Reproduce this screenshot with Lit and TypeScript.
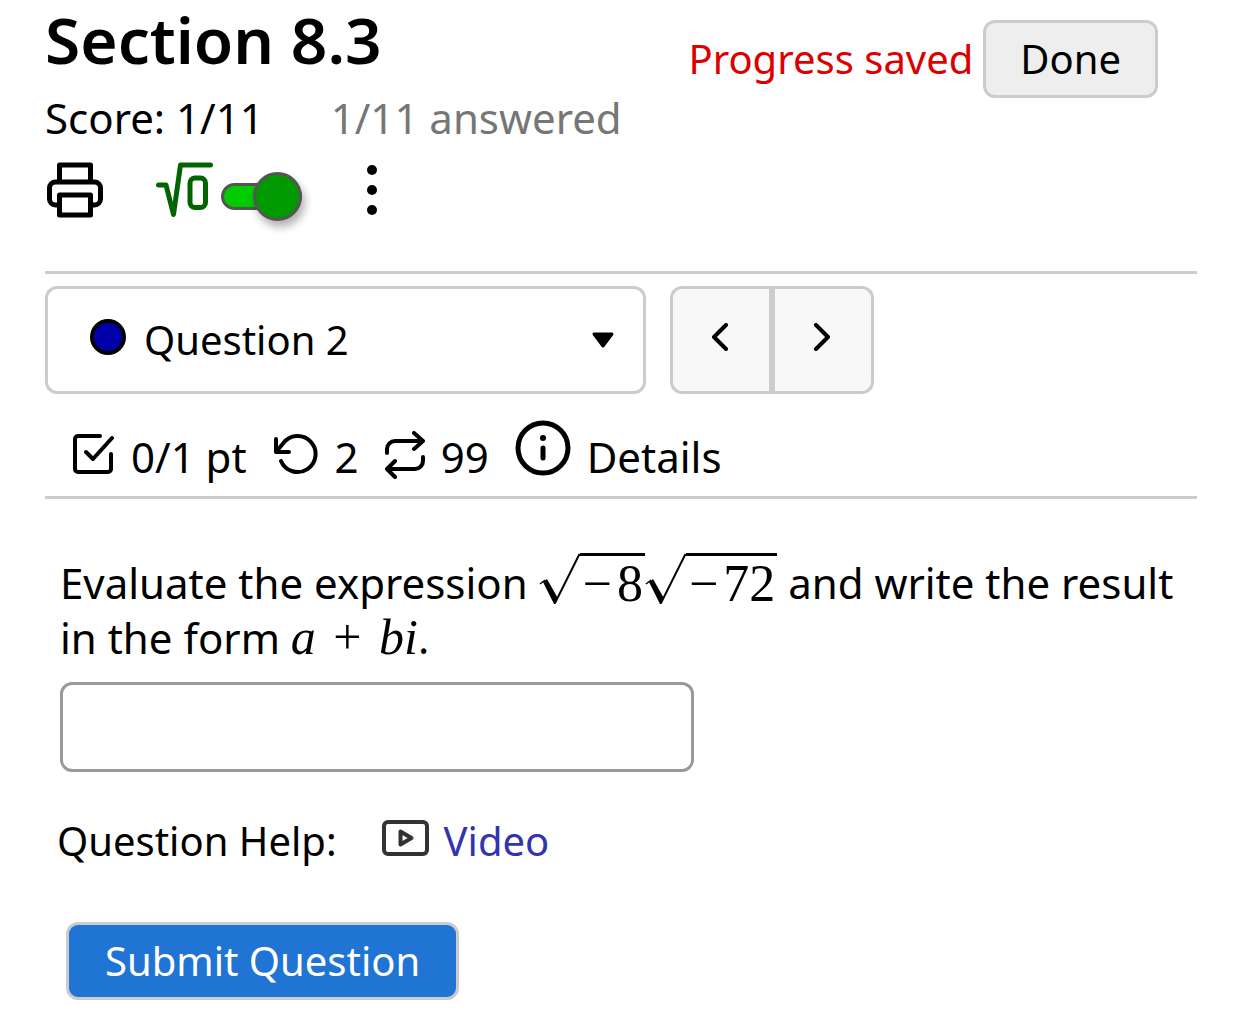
import { LitElement, html, css, svg } from "lit";
import { customElement, property, state } from "lit/decorators.js";

const printer = svg`<svg class="icon" width="56" height="56" viewBox="0 0 56 56" fill="none" stroke="currentColor" stroke-width="5" stroke-linejoin="round" aria-hidden="true">
  <path d="M12.500 20V3h31v17M12.500 43H8.500a6 6 0 0 1-6-6V26a6 6 0 0 1 6-6h39a6 6 0 0 1 6 6v11a6 6 0 0 1-6 6h-4"/>
  <path d="M12.500 33h31v20h-31z"/></svg>`;

const rootSign = svg`<svg class="icon root" width="58" height="56" viewBox="0 0 58 56" fill="none" stroke="currentColor" stroke-width="5" stroke-linecap="round" stroke-linejoin="round" aria-hidden="true">
  <path d="M2.500 23h7.500l7.500 29.500L24.500 3h30"/><rect x="34" y="16" width="15.500" height="29.500" rx="5"/></svg>`;

const dots = svg`<svg class="icon" width="10" height="50" viewBox="0 0 10 50" fill="currentColor" aria-hidden="true">
  <circle cx="5" cy="5" r="5"/><circle cx="5" cy="25" r="5"/><circle cx="5" cy="45" r="5"/></svg>`;

const checkBox = svg`<svg class="icon" width="43" height="42" viewBox="0 0 43 42" fill="none" stroke="currentColor" stroke-width="4" stroke-linecap="round" stroke-linejoin="round" aria-hidden="true">
  <path d="M28 2H6a3 3 0 0 0-3 3v30a3 3 0 0 0 3 3h30a3 3 0 0 0 3-3V20M14 18l7 7L40 4"/></svg>`;

const undo = svg`<svg class="icon" width="46" height="42" viewBox="0 0 46 42" fill="none" stroke="currentColor" stroke-width="4" stroke-linecap="round" stroke-linejoin="round" aria-hidden="true">
  <path d="M3 5v13h13M3 18L10 9.500A18 18 0 1 1 8 27"/></svg>`;

const repeat = svg`<svg class="icon" width="40" height="48" viewBox="0 0 40 48" fill="none" stroke="currentColor" stroke-width="4" stroke-linecap="round" stroke-linejoin="round" aria-hidden="true">
  <path d="M29 2l9 8-9 8M38 10H10a8 8 0 0 0-8 8v4M10 46l-8-8 8-8M2 38h28a8 8 0 0 0 8-8v-4"/></svg>`;

const info = svg`<svg class="icon" width="56" height="56" viewBox="0 0 56 56" fill="none" stroke="currentColor" stroke-width="5" stroke-linecap="round" aria-hidden="true">
  <circle cx="28" cy="28" r="25"/><path d="M28 28v10"/><circle cx="28" cy="18" r="3" fill="currentColor" stroke="none"/></svg>`;

const video = svg`<svg class="icon video" width="48" height="36" viewBox="0 0 48 36" fill="none" stroke="currentColor" stroke-linejoin="round" aria-hidden="true">
  <rect x="2" y="2" width="43" height="32" rx="4" stroke-width="4"/><path d="M18.500 11.500v13l11-6.500z" stroke-width="4"/></svg>`;

const chevron = (d: string) => svg`<svg class="icon" width="20" height="28" viewBox="0 0 20 28" fill="none" stroke="currentColor" stroke-width="4" stroke-linecap="round" stroke-linejoin="round" aria-hidden="true"><path d=${d}/></svg>`;

@customElement("math-root")
class MathRoot extends LitElement {
  @property() value = "";

  static styles = css`
    :host { display: inline-flex; align-items: flex-start; height: 52px; margin-top: -6px; vertical-align: -6px; }
    .sign { display: block; }
    .radicand {
      display: flex;
      gap: 5px;
      border-top: 3px solid #000;
      font: 52px/56px "Liberation Serif", serif;
      padding: 0 2px 0 3px;
    }
  `;

  render() {
    return html`<svg class="sign" width="41" height="52" viewBox="0 0 41 52" aria-hidden="true">
        <path d="M1 31L5.500 27.500L16.500 46.500" fill="none" stroke="#000" stroke-width="1.500"/>
        <path d="M4 29L8 26L18.500 44.500L16.500 51H15z" fill="#000"/>
        <path d="M16 50L40.500 1" fill="none" stroke="#000" stroke-width="2"/></svg
      ><span class="radicand"><span>−</span><span>${this.value}</span></span>`;
  }
}

@customElement("app-root")
class AppRoot extends LitElement {
  @state() private mathEntry = true;
  @state() private answer = "";

  static styles = css`
    :host {
      display: block;
      background: #fff;
      color: #000;
      font: 42px/54px "Noto Sans", "Open Sans", sans-serif;
    }
    *, *::before { box-sizing: border-box; }
    button, input, select { font: inherit; color: inherit; margin: 0; }
    button { cursor: pointer; padding: 0; }
    .icon { display: block; flex: none; }
    .page { padding: 0 45px 24px; }
    .header {
      display: flex;
      justify-content: space-between;
      align-items: flex-start;
      padding-bottom: 52px;
      border-bottom: 3px solid #ccc;
    }
    h1 { margin: 0; font-size: 64px; font-weight: 600; line-height: 80px; }
    .score { display: flex; gap: 67px; padding-top: 11px; }
    .muted { color: #767676; }
    .tools { display: flex; align-items: center; padding: 15px 2px 0; height: 74px; }
    .plain { border: 0; background: none; }
    .entry { display: flex; align-items: center; gap: 7px; margin-left: 53px; }
    .root { color: #006400; }
    .switch {
      appearance: none;
      display: flex;
      align-items: center;
      justify-content: flex-start;
      width: 81px;
      height: 27px;
      margin-top: 13px;
      border: 3px solid #555;
      border-radius: 14px;
      background: #ddd;
    }
    .switch::before {
      content: "";
      flex: none;
      width: 49px;
      height: 49px;
      margin: 0 -3px;
      border: 3px solid #555;
      border-radius: 50%;
      background: #888;
      box-shadow: 3px 6px 9px rgba(0, 0, 0, 0.3);
    }
    .switch:checked { background: #0c0; justify-content: flex-end; }
    .switch:checked::before { background: #090; }
    .menu { margin-left: 65px; }
    .status { display: flex; align-items: center; gap: 10px; padding: 20px 39px 0 0; font-size: 40px; }
    .saved { color: #d00; }
    .done {
      padding: 9px 34px;
      border: 3px solid #ccc;
      border-radius: 12px;
      background: #eee;
    }
    .nav { display: flex; gap: 24px; padding-top: 12px; font-size: 40px; }
    .picker { display: grid; flex: 0 1 601px; align-items: center; }
    .picker > * { grid-area: 1 / 1; }
    .picker select {
      appearance: none;
      width: 100%;
      height: 108px;
      padding: 0 60px 0 96px;
      border: 3px solid #ccc;
      border-radius: 12px;
      background: #fff;
    }
    .dot {
      width: 36px;
      height: 36px;
      margin: 0 0 6px 45px;
      border: 4px solid #000;
      border-radius: 50%;
      background: #00a;
      pointer-events: none;
    }
    .caret { justify-self: end; margin-right: 31px; pointer-events: none; }
    .steps { display: flex; }
    .steps button {
      display: flex;
      align-items: center;
      justify-content: center;
      width: 102px;
      height: 108px;
      padding-bottom: 6px;
      border: 3px solid #ccc;
      background: #f8f8f8;
    }
    .steps .prev { border-radius: 12px 0 0 12px; }
    .steps .next { border-radius: 0 12px 12px 0; }
    .facts {
      display: flex;
      align-items: center;
      gap: 26px;
      padding: 23px 27px 0;
      height: 105px;
      border-bottom: 3px solid #ccc;
    }
    .fact, .details { display: flex; align-items: center; gap: 16px; }
    .fact .icon { margin-bottom: 4px; }
    .details .icon { margin-bottom: 18px; }
    .question { padding: 57px 15px 0; }
    .prompt { margin: 0; }
    .math { font-family: "Liberation Serif", serif; font-size: 50px; line-height: 54px; }
    .plus { padding: 0 5px; }
    .answer {
      display: block;
      width: 634px;
      max-width: 100%;
      height: 90px;
      margin-top: 17px;
      padding: 0 20px;
      border: 3px solid #999;
      border-radius: 12px;
      background: #fff;
    }
    .help { display: flex; align-items: center; gap: 45px; padding: 42px 12px 0; font-size: 40px; }
    .help a { display: flex; align-items: center; gap: 14px; color: #3333b0; text-decoration: none; }
    .video { color: #333; margin-bottom: 6px; }
    .submit {
      display: block;
      margin: 54px 21px 0;
      padding: 9px 36px;
      border: 3px solid #ccc;
      border-radius: 12px;
      background: #1f74d4;
      color: #fff;
      font-size: 40px;
    }
  `;

  private toggleEntry(e: Event) {
    this.mathEntry = (e.target as HTMLInputElement).checked;
  }

  private editAnswer(e: Event) {
    this.answer = (e.target as HTMLInputElement).value;
  }

  render() {
    return html`<main class="page">
      <header class="header">
        <div>
          <h1>Section 8.3</h1>
          <div class="score"><span>Score: 1/11</span><span class="muted">1/11 answered</span></div>
          <div class="tools">
            <button class="plain" aria-label="Print">${printer}</button>
            <label class="entry">${rootSign}<input class="switch" type="checkbox" aria-label="Equation editor"
              .checked=${this.mathEntry} @change=${this.toggleEntry}></label>
            <button class="plain menu" aria-label="More options">${dots}</button>
          </div>
        </div>
        <div class="status"><span class="saved">Progress saved</span><button class="done">Done</button></div>
      </header>
      <nav class="nav">
        <div class="picker">
          <select aria-label="Question"><option>Question 2</option></select>
          <span class="dot"></span>
          <svg class="icon caret" width="24" height="17" viewBox="0 0 24 17" aria-hidden="true"><path d="M3 2h18l-9 12z" stroke="#000" stroke-width="3" stroke-linejoin="round"/></svg>
        </div>
        <div class="steps">
          <button class="prev" aria-label="Previous question">${chevron("M15 2L3 14l12 12")}</button>
          <button class="next" aria-label="Next question">${chevron("M3 2l12 12L3 26")}</button>
        </div>
      </nav>
      <div class="facts">
        <span class="fact">${checkBox}0/1 pt</span>
        <span class="fact">${undo}2</span>
        <span class="fact">${repeat}99</span>
        <button class="plain details">${info}Details</button>
      </div>
      <section class="question">
        <p class="prompt" id="prompt">Evaluate the expression <math-root value="8"></math-root><math-root value="72"></math-root> and write the result in the form <span class="math"><i>a</i> <span class="plus">+</span> <i>bi</i></span>.</p>
        <input class="answer" type="text" aria-labelledby="prompt" .value=${this.answer} @input=${this.editAnswer}>
      </section>
      <div class="help"><span>Question Help:</span><a href="#video">${video}Video</a></div>
      <button class="submit">Submit Question</button>
    </main>`;
  }
}
